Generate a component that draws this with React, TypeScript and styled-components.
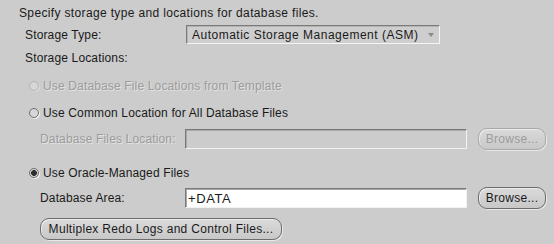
import * as React from 'react';
import styled, { createGlobalStyle } from 'styled-components';

const GlobalStyle = createGlobalStyle`
    html, body {
        margin: 0;
        padding: 0;
        background: #cccccc;
    }
    body {
        font-family: 'Liberation Sans', 'DejaVu Sans', sans-serif;
        font-size: 12px;
        color: #1a1a1a;
    }
`;

const Panel = styled.div`
    width: 554px;
    height: 244px;
    box-sizing: border-box;
    padding: 5px 0 0 19px;
    background: #cccccc;
    display: flex;
    flex-direction: column;
`;

const Row = styled.div<{ $indent: number; $top: number; $height: number }>`
    display: flex;
    align-items: center;
    padding-left: ${p => p.$indent}px;
    margin-top: ${p => p.$top}px;
    height: ${p => p.$height}px;
    flex: none;
`;

const Label = styled.span<{ $width?: number; $disabled?: boolean; $spacing?: number }>`
    width: ${p => (p.$width ? `${p.$width}px` : 'auto')};
    flex: none;
    color: ${p => (p.$disabled ? '#9c9c9c' : '#1a1a1a')};
    text-shadow: ${p => (p.$disabled ? '1px 1px 0 #e2e2e2' : 'none')};
    letter-spacing: ${p => p.$spacing ?? 0.15}px;
    white-space: nowrap;
`;

const Combo = styled.div`
    width: 254px;
    height: 19px;
    box-sizing: border-box;
    border: 1px solid;
    border-color: #7a7a7a #f4f4f4 #f4f4f4 #7a7a7a;
    box-shadow: inset 1px 1px 0 #b4b4b4;
    background: #cecece;
    display: flex;
    align-items: center;
    justify-content: space-between;
    padding: 0 5px 0 5px;
    white-space: nowrap;
    letter-spacing: 0.5px;
`;

const Arrow = styled.span`
    width: 0;
    height: 0;
    border-left: 3.5px solid transparent;
    border-right: 3.5px solid transparent;
    border-top: 4px solid #8a8a8a;
`;

const RadioDot = styled.span<{ $checked?: boolean; $disabled?: boolean }>`
    width: 10px;
    height: 10px;
    flex: none;
    box-sizing: border-box;
    border-radius: 50%;
    border: 1px solid ${p => (p.$disabled ? '#b4b4b4' : '#6e6e6e')};
    background: ${p =>
        p.$checked ? 'radial-gradient(circle, #2e2e2e 0 2.6px, #d6d6d6 3.2px)' : '#d6d6d6'};
    box-shadow: 1px 1px 0 ${p => (p.$disabled ? '#dadada' : '#f2f2f2')};
    margin-right: 4px;
`;

const Field = styled.div<{ $disabled?: boolean }>`
    width: 282px;
    height: 20px;
    box-sizing: border-box;
    border: 1px solid;
    border-color: #7a7a7a #f2f2f2 #f2f2f2 #7a7a7a;
    box-shadow: inset 1px 1px 0 #a8a8a8;
    background: ${p => (p.$disabled ? '#cccccc' : '#ffffff')};
    padding-left: 2px;
    display: flex;
    align-items: center;
    font-size: 13px;
    letter-spacing: 0.6px;
`;

const PillButton = styled.div<{ $disabled?: boolean; $width: number }>`
    width: ${p => p.$width}px;
    height: 22px;
    box-sizing: border-box;
    border-radius: 9px;
    border: 1px solid ${p => (p.$disabled ? '#a8a8a8' : '#6c6c6c')};
    background: linear-gradient(#dadada, #c8c8c8);
    box-shadow: inset 1px 1px 0 #ececec, 1px 1px 0 #e8e8e8;
    color: ${p => (p.$disabled ? '#9c9c9c' : '#1a1a1a')};
    display: flex;
    align-items: center;
    justify-content: center;
    white-space: nowrap;
    letter-spacing: 0.3px;
`;

const Spacer = styled.div<{ $width: number }>`
    width: ${p => p.$width}px;
    flex: none;
`;

export default function App() {
    return (
        <>
            <GlobalStyle />
            <Panel>
                <Row $indent={0} $top={0} $height={16}>
                    <Label $spacing={0.35}>Specify storage type and locations for database files.</Label>
                </Row>
                <Row $indent={6} $top={4} $height={19}>
                    <Label $width={161}>Storage Type:</Label>
                    <Combo>
                        <span>Automatic Storage Management (ASM)</span>
                        <Arrow />
                    </Combo>
                </Row>
                <Row $indent={6} $top={6} $height={16}>
                    <Label>Storage Locations:</Label>
                </Row>
                <Row $indent={10} $top={12} $height={16}>
                    <RadioDot $disabled />
                    <Label $disabled>Use Database File Locations from Template</Label>
                </Row>
                <Row $indent={10} $top={11} $height={16}>
                    <RadioDot />
                    <Label>Use Common Location for All Database Files</Label>
                </Row>
                <Row $indent={21} $top={7} $height={22}>
                    <Label $width={145} $disabled>Database Files Location:</Label>
                    <Field $disabled />
                    <Spacer $width={11} />
                    <PillButton $disabled $width={68}>Browse...</PillButton>
                </Row>
                <Row $indent={10} $top={15} $height={16}>
                    <RadioDot $checked />
                    <Label>Use Oracle-Managed Files</Label>
                </Row>
                <Row $indent={21} $top={6} $height={22}>
                    <Label $width={145}>Database Area:</Label>
                    <Field>+DATA</Field>
                    <Spacer $width={11} />
                    <PillButton $width={68}>Browse...</PillButton>
                </Row>
                <Row $indent={21} $top={9} $height={22}>
                    <PillButton $width={242}>Multiplex Redo Logs and Control Files...</PillButton>
                </Row>
            </Panel>
        </>
    );
}
